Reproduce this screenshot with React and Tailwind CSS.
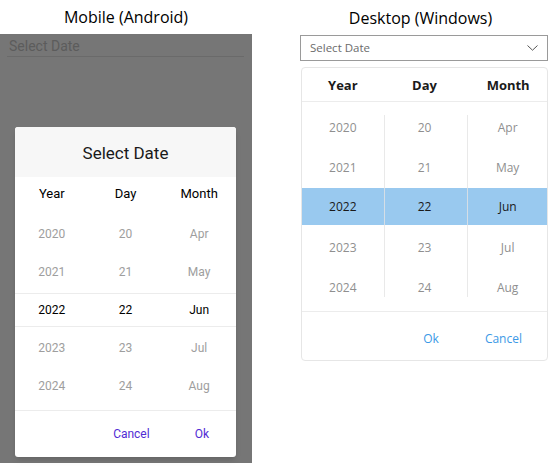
import React from "react";

const mobileYears = ["2020", "2021", "2022", "2023", "2024"];
const mobileDays = ["20", "21", "22", "23", "24"];
const mobileMonths = ["Apr", "May", "Jun", "Jul", "Aug"];
const rows = mobileYears.map((y, i) => [y, mobileDays[i], mobileMonths[i]]);
const selectedIndex = 2;

function MobilePicker() {
  return (
    <div className="w-[252px] flex flex-col" style={{ fontFamily: "Roboto, sans-serif" }}>
      <div
        className="h-[34px] flex items-center justify-center text-[16px] text-black"
        style={{ fontFamily: "'Open Sans', sans-serif" }}
      >
        Mobile (Android)
      </div>
      <div className="h-[429px] bg-[#767676] flex flex-col">
        <div className="ml-[7px] w-[237px] h-[23px] border-b border-[#6a6a6a] pl-[2px] pt-[2px] flex items-center text-[14px] text-[#5c5c5c]">
          Select Date
        </div>
        <div className="ml-[15px] mt-[70px] w-[221px] h-[330px] bg-white rounded-[3px] shadow-md overflow-hidden flex flex-col">
          <div className="h-[50px] pt-[3px] bg-[#f7f7f7] flex items-center justify-center text-[17px] text-[#1a1a1a]">
            Select Date
          </div>
          <div className="h-[32px] pt-[2px] grid grid-cols-3 items-center text-center text-[13px] text-black">
            <span>Year</span>
            <span>Day</span>
            <span>Month</span>
          </div>
          <div className="mt-[6px] flex flex-col">
            {rows.map((r, i) =>
              i === selectedIndex ? (
                <div
                  key={r[0]}
                  className="my-[2px] h-[34px] border-y border-[#ececec] grid grid-cols-3 items-center text-center text-[12px] text-black"
                >
                  {r.map((c) => (
                    <span key={c}>{c}</span>
                  ))}
                </div>
              ) : (
                <div
                  key={r[0]}
                  className="h-[38px] grid grid-cols-3 items-center text-center text-[12px] text-[#9e9e9e]"
                >
                  {r.map((c) => (
                    <span key={c}>{c}</span>
                  ))}
                </div>
              )
            )}
          </div>
          <div className="mt-[5px] border-t border-[#ececec] h-[47px] flex items-center justify-end pr-[27px] gap-[45px] text-[12px] text-[#512bd4]">
            <span>Cancel</span>
            <span>Ok</span>
          </div>
        </div>
      </div>
    </div>
  );
}

function DesktopPicker() {
  return (
    <div className="ml-[48px] w-[249px] flex flex-col" style={{ fontFamily: "'Open Sans', sans-serif" }}>
      <div className="h-[35px] flex items-center justify-center text-[16px] text-black pr-[8px]">
        Desktop (Windows)
      </div>
      <div className="w-[248px] h-[26px] border border-[#9a9a9a] flex items-center justify-between pl-[9px] pr-[9px] text-[11.5px] text-[#6b6b6b]">
        <span>Select Date</span>
        <svg width="11" height="6" viewBox="0 0 11 6" fill="none">
          <polyline points="0.5,0.5 5.5,5.2 10.5,0.5" stroke="#555" strokeWidth="1" />
        </svg>
      </div>
      <div className="mt-[6px] ml-px w-[247px] h-[294px] border border-[#e6e6e6] rounded-[4px] bg-white flex flex-col">
        <div className="h-[34px] pt-[3px] border-b border-[#ececec] grid grid-cols-3 items-center text-center text-[13px] font-bold text-[#1a1a1a]">
          <span>Year</span>
          <span>Day</span>
          <span className="pl-[4px]">Month</span>
        </div>
        <div className="relative pt-[6px] pb-[3px] flex flex-col">
          {rows.map((r, i) =>
            i === selectedIndex ? (
              <div
                key={r[0]}
                className="h-[37px] mb-[3px] bg-[#99c9ef] grid grid-cols-3 items-center text-center text-[12px] text-[#1a1a1a]"
              >
                {r.map((c) => (
                  <span key={c} className={c === "Jun" ? "pl-[3px]" : ""}>{c}</span>
                ))}
              </div>
            ) : (
              <div
                key={r[0]}
                className="h-[40px] grid grid-cols-3 items-center text-center text-[12px] text-[#8f8f8f]"
              >
                {r.map((c, j) => (
                  <span key={c} className={j === 2 ? "pl-[3px]" : ""}>{c}</span>
                ))}
              </div>
            )
          )}
          <div className="absolute left-[82px] top-[13px] bottom-[14px] w-px bg-[#e4e4e4]/80" />
          <div className="absolute left-[165px] top-[13px] bottom-[14px] w-px bg-[#e4e4e4]/80" />
        </div>
        <div className="border-t border-[#ececec] flex-1 pt-[5px] flex items-center justify-end pr-[25px] gap-[46px] text-[12px] text-[#3b99e6]">
          <span>Ok</span>
          <span>Cancel</span>
        </div>
      </div>
    </div>
  );
}

export default function App() {
  return (
    <div className="w-[550px] h-[466px] bg-white flex items-start">
      <MobilePicker />
      <DesktopPicker />
    </div>
  );
}
